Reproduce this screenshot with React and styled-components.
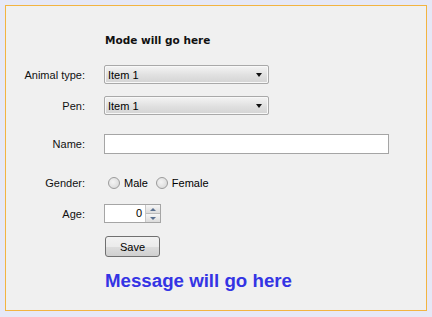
import styled, { createGlobalStyle } from "styled-components";

const GlobalStyle = createGlobalStyle`
  html, body {
    margin: 0;
    padding: 0;
    background: #e6e8f6;
  }
  body {
    font-family: Tahoma, "DejaVu Sans", "Liberation Sans", sans-serif;
    font-size: 11px;
    color: #000;
  }
`;

const Frame = styled.div`
  box-sizing: border-box;
  margin: 5px 0 0 5px;
  width: 422px;
  height: 306px;
  border: 1px solid #f2b441;
  background: #f0f0f0;
  padding-top: 25px;
  display: flex;
  flex-direction: column;
`;

const Row = styled.div`
  display: grid;
  grid-template-columns: 79px auto;
  column-gap: 19px;
  align-items: center;
  height: ${(p) => p.$h}px;
  margin-top: ${(p) => p.$mt || 0}px;
`;

const Label = styled.div`
  font-family: "Liberation Sans", Arial, sans-serif;
  font-size: 11px;
  text-align: right;
  color: #111;
`;

const Mode = styled.div`
  font-family: "DejaVu Sans", sans-serif;
  font-weight: bold;
  font-size: 10.5px;
  color: #111;
  padding-left: 1px;
`;

const Combo = styled.div`
  box-sizing: border-box;
  width: 165px;
  height: 19px;
  border: 1px solid #a9a9a9;
  border-radius: 2px;
  background: linear-gradient(#f4f4f4, #e0e0e0 55%, #d4d4d4);
  display: flex;
  align-items: center;
  justify-content: space-between;
  padding: 0 6px 0 3px;
  font-family: "Liberation Sans", Arial, sans-serif;
  font-size: 11px;
  box-shadow: inset 0 0 0 1px #f8f8f8;
`;

const Arrow = styled.span`
  width: 0;
  height: 0;
  border-left: 3.5px solid transparent;
  border-right: 3.5px solid transparent;
  border-top: 4px solid #111;
  margin-top: 1px;
`;

const TextInput = styled.div`
  box-sizing: border-box;
  width: 285px;
  height: 20px;
  border: 1px solid #a5a5a5;
  background: #fff;
`;

const Radios = styled.div`
  display: flex;
  align-items: center;
  gap: 4px;
  padding-left: 4px;
  font-family: "Liberation Sans", Arial, sans-serif;
  font-size: 11px;
`;

const Radio = styled.span`
  box-sizing: border-box;
  width: 12px;
  height: 12px;
  border-radius: 50%;
  border: 1px solid #9b9b9b;
  background: radial-gradient(circle at 40% 40%, #f4f4f4, #d4d4d4);
  margin-left: ${(p) => p.$ml || 0}px;
`;

const Spinner = styled.div`
  box-sizing: border-box;
  width: 57px;
  height: 19px;
  border: 1px solid #a5a5a5;
  background: #fff;
  display: flex;
  align-items: stretch;
  font-family: "Liberation Sans", Arial, sans-serif;
  font-size: 11px;
`;

const SpinValue = styled.div`
  flex: 1;
  text-align: right;
  padding-right: 3px;
  line-height: 17px;
`;

const SpinButtons = styled.div`
  width: 14px;
  display: flex;
  flex-direction: column;
  border-left: 1px solid #c8c8c8;
`;

const SpinButton = styled.div`
  flex: 1;
  display: flex;
  align-items: center;
  justify-content: center;
  background: linear-gradient(#f6f6f6, #dcdcdc);
  border-bottom: ${(p) => (p.$top ? "1px solid #bbb" : "none")};
`;

const SpinArrow = styled.span`
  width: 0;
  height: 0;
  border-left: 3px solid transparent;
  border-right: 3px solid transparent;
  ${(p) =>
    p.$up ? "border-bottom: 3px solid #5a7090;" : "border-top: 3px solid #5a7090;"}
`;

const Button = styled.div`
  box-sizing: border-box;
  width: 55px;
  height: 21px;
  border: 1px solid #707070;
  border-radius: 3px;
  background: linear-gradient(#f2f2f2 0%, #ebebeb 50%, #dddddd 51%, #cfcfcf 100%);
  display: flex;
  align-items: center;
  justify-content: center;
  font-family: "Liberation Sans", Arial, sans-serif;
  font-size: 11px;
  margin-left: 1px;
`;

const Message = styled.div`
  font-family: "Liberation Sans", Arial, sans-serif;
  font-weight: bold;
  font-size: 18.7px;
  color: #3434e4;
  padding-left: 1px;
`;

const App = () => {
  return (
    <>
      <GlobalStyle />
      <Frame>
        <Row $h={18}>
          <span />
          <Mode>Mode will go here</Mode>
        </Row>
        <Row $h={19} $mt={16}>
          <Label>Animal type:</Label>
          <Combo>
            Item 1
            <Arrow />
          </Combo>
        </Row>
        <Row $h={19} $mt={12}>
          <Label>Pen:</Label>
          <Combo>
            Item 1
            <Arrow />
          </Combo>
        </Row>
        <Row $h={20} $mt={19}>
          <Label>Name:</Label>
          <TextInput />
        </Row>
        <Row $h={16} $mt={21}>
          <Label>Gender:</Label>
          <Radios>
            <Radio />
            Male
            <Radio $ml={4} />
            Female
          </Radios>
        </Row>
        <Row $h={19} $mt={13}>
          <Label>Age:</Label>
          <Spinner>
            <SpinValue>0</SpinValue>
            <SpinButtons>
              <SpinButton $top>
                <SpinArrow $up />
              </SpinButton>
              <SpinButton>
                <SpinArrow />
              </SpinButton>
            </SpinButtons>
          </Spinner>
        </Row>
        <Row $h={21} $mt={13}>
          <span />
          <Button>Save</Button>
        </Row>
        <Row $h={22} $mt={13}>
          <span />
          <Message>Message will go here</Message>
        </Row>
      </Frame>
    </>
  );
};

export default App;
